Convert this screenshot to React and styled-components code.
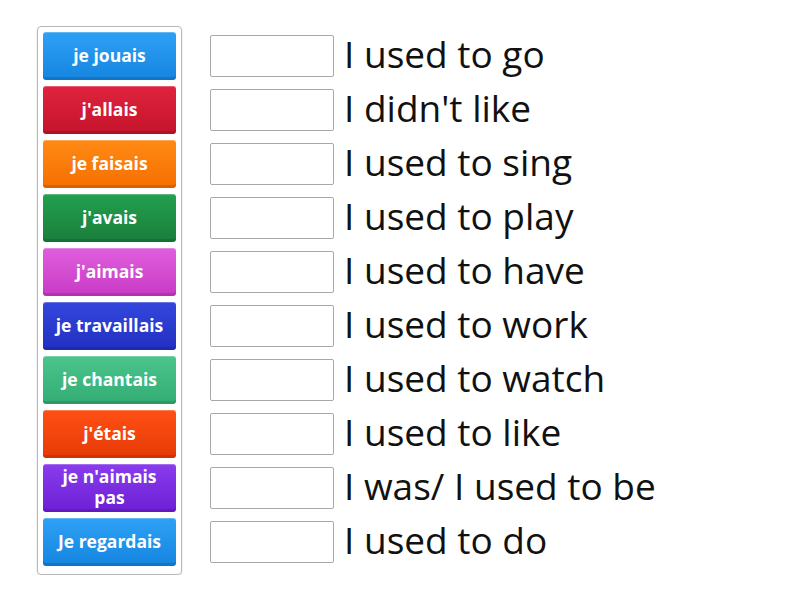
import React from 'react';
import styled, { createGlobalStyle } from 'styled-components';

const GlobalStyle = createGlobalStyle`
  body {
    margin: 0;
    background: #ffffff;
    font-family: "Open Sans", "Liberation Sans", sans-serif;
  }
`;

const Page = styled.div`
  display: flex;
  align-items: flex-start;
  padding: 26px 0 0 37px;
`;

const TilePanel = styled.div`
  display: flex;
  flex-direction: column;
  gap: 6px;
  padding: 5px 5px 8px 5px;
  border: 1px solid #b8b8b8;
  border-radius: 4px;
  box-shadow: 0 1px 2px rgba(0, 0, 0, 0.15);
`;

const Tile = styled.div`
  width: 133px;
  height: 48px;
  box-sizing: border-box;
  display: flex;
  align-items: center;
  justify-content: center;
  text-align: center;
  padding: 0 8px 2px;
  border-radius: 3px;
  color: #ffffff;
  font-weight: 700;
  font-size: 17.5px;
  line-height: 21px;
  background: linear-gradient(to bottom, ${(p) => p.$top}, ${(p) => p.$bottom});
  box-shadow: inset 0 -3px 0 rgba(0, 0, 0, 0.12), inset 0 1px 0 rgba(255, 255, 255, 0.25);
`;

const Answers = styled.div`
  display: flex;
  flex-direction: column;
  margin-left: 28px;
  padding-top: 3px;
`;

const Row = styled.div`
  display: flex;
  align-items: center;
  height: 54px;
  gap: 10px;
`;

const Slot = styled.div`
  width: 124px;
  height: 42px;
  box-sizing: border-box;
  border: 1px solid #a8a8a8;
  border-radius: 2px;
  background: #ffffff;
`;

const Prompt = styled.span`
  font-size: 37px;
  line-height: 44px;
  color: #111111;
  white-space: nowrap;
  margin-top: -4px;
`;

const tiles = [
  { text: 'je jouais', top: '#2ea1f5', bottom: '#1585e0' },
  { text: "j'allais", top: '#e0233e', bottom: '#c4142b' },
  { text: 'je faisais', top: '#ff8a14', bottom: '#f56f00' },
  { text: "j'avais", top: '#23a04e', bottom: '#1a7e3c' },
  { text: "j'aimais", top: '#df5fdc', bottom: '#c93ac6' },
  { text: 'je travaillais', top: '#3346dc', bottom: '#2230c2' },
  { text: 'je chantais', top: '#4cc48c', bottom: '#34ad75' },
  { text: "j'étais", top: '#ff4f14', bottom: '#e63a06' },
  { text: "je n'aimais pas", top: '#8a3ded', bottom: '#6c1fd4' },
  { text: 'Je regardais', top: '#2ea1f5', bottom: '#1585e0' },
];

const prompts = [
  'I used to go',
  "I didn't like",
  'I used to sing',
  'I used to play',
  'I used to have',
  'I used to work',
  'I used to watch',
  'I used to like',
  'I was/ I used to be',
  'I used to do',
];

const App = () => {
  return (
    <Page>
      <GlobalStyle />
      <TilePanel>
        {tiles.map((t) => (
          <Tile key={t.text} $top={t.top} $bottom={t.bottom}>
            {t.text}
          </Tile>
        ))}
      </TilePanel>
      <Answers>
        {prompts.map((p) => (
          <Row key={p}>
            <Slot />
            <Prompt>{p}</Prompt>
          </Row>
        ))}
      </Answers>
    </Page>
  );
};

export default App;
